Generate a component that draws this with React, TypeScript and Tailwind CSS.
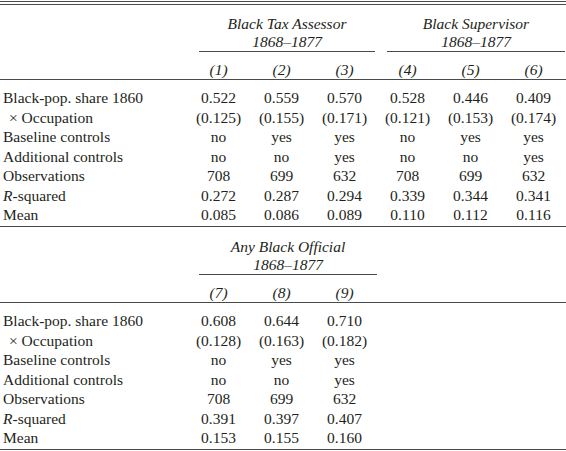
import React from 'react'

type Group = { title: string; lineClass: string }

interface PanelProps {
  groups: Group[]
  cols: string[]
  rows: string[][]
  headTop: string
}

const labels: React.ReactNode[] = [
  'Black-pop. share 1860',
  <span className="pl-[6px]">× Occupation</span>,
  'Baseline controls',
  'Additional controls',
  'Observations',
  <>
    <i>R</i>-squared
  </>,
  'Mean',
]

const Panel = ({ groups, cols, rows, headTop }: PanelProps) => {
  return (
    <div className="border-b border-[#4a4a4a]">
      {/* group headers */}
      <div className={`grid grid-cols-[187px_repeat(6,63px)] ${headTop}`}>
        <div />
        {groups.map((g) => (
          <div key={g.title} className="col-span-3">
            <div className={`border-b border-[#4a4a4a] text-center italic leading-[18px] ${g.lineClass}`}>
              <div>{g.title}</div>
              <div>1868–1877</div>
            </div>
          </div>
        ))}
      </div>

      {/* column numbers */}
      <div className="grid grid-cols-[187px_repeat(6,63px)] border-b border-[#4a4a4a] pt-[9px] leading-[18px]">
        <div />
        {cols.map((c) => (
          <div key={c} className="text-center italic">
            ({c})
          </div>
        ))}
      </div>

      {/* data */}
      <div className="pt-[8px] pb-[1.5px]">
        {labels.map((label, i) => (
          <div
            key={i}
            className="grid grid-cols-[187px_repeat(6,63px)] leading-[19.5px]"
          >
            <div className="pl-[3px] whitespace-nowrap">{label}</div>
            {rows[i].map((v, j) => (
              <div key={j} className="text-center">
                {v}
              </div>
            ))}
          </div>
        ))}
      </div>
    </div>
  )
}

export default function App() {
  const top: string[][] = [
    ['0.522', '0.559', '0.570', '0.528', '0.446', '0.409'],
    ['(0.125)', '(0.155)', '(0.171)', '(0.121)', '(0.153)', '(0.174)'],
    ['no', 'yes', 'yes', 'no', 'yes', 'yes'],
    ['no', 'no', 'yes', 'no', 'no', 'yes'],
    ['708', '699', '632', '708', '699', '632'],
    ['0.272', '0.287', '0.294', '0.339', '0.344', '0.341'],
    ['0.085', '0.086', '0.089', '0.110', '0.112', '0.116'],
  ]

  const bottom: string[][] = [
    ['0.608', '0.644', '0.710'],
    ['(0.128)', '(0.163)', '(0.182)'],
    ['no', 'yes', 'yes'],
    ['no', 'no', 'yes'],
    ['708', '699', '632'],
    ['0.391', '0.397', '0.407'],
    ['0.153', '0.155', '0.160'],
  ]

  return (
    <div className="w-[566px] h-[451px] bg-white text-[#231f20] text-[15.5px] font-[family-name:'Liberation_Serif',serif]">
      <div className="pt-[1px]">
        <div className="h-px bg-[#4a4a4a]" />
        <div className="mt-[2px] h-px bg-[#4a4a4a]" />
      </div>

      <Panel
        groups={[
          { title: 'Black Tax Assessor', lineClass: 'ml-[12px] mr-[1px]' },
          { title: 'Black Supervisor', lineClass: 'ml-[11px]' },
        ]}
        cols={['1', '2', '3', '4', '5', '6']}
        rows={top}
        headTop="pt-[10px]"
      />

      <Panel
        groups={[{ title: 'Any Black Official', lineClass: 'ml-[12px] mr-[-1px]' }]}
        cols={['7', '8', '9']}
        rows={bottom}
        headTop="pt-[11px]"
      />
    </div>
  )
}
